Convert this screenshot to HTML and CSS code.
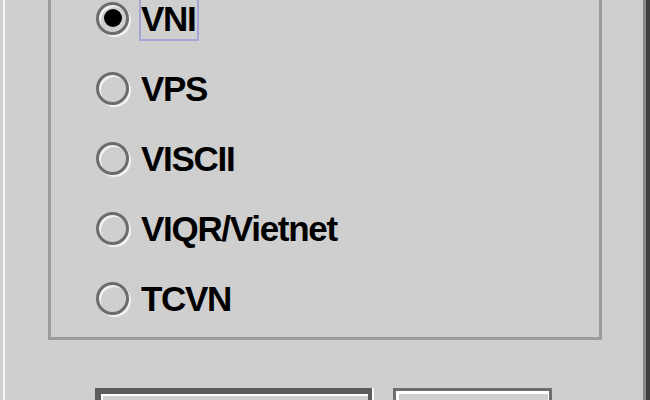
FILE: index.html
```html
<!DOCTYPE html>
<html>
<head>
<meta charset="utf-8">
<link rel="stylesheet" href="styles.css">
</head>
<body>
<div class="window">
  <div class="dialog">
    <div class="group">
      <div class="row"><span class="radio checked"><span class="dot"></span></span><span class="label focus">VNI</span></div>
      <div class="row"><span class="radio"></span><span class="label">VPS</span></div>
      <div class="row"><span class="radio"></span><span class="label">VISCII</span></div>
      <div class="row"><span class="radio"></span><span class="label">VIQR/Vietnet</span></div>
      <div class="row"><span class="radio"></span><span class="label">TCVN</span></div>
    </div>
    <div class="buttons">
      <div class="btn default"></div>
      <div class="btn normal"></div>
    </div>
  </div>
</div>
</body>
</html>
```
FILE: styles.css
```css
html, body {
  margin: 0;
  padding: 0;
  background: #cfcfcf;
  overflow: hidden;
}
.window {
  width: 650px;
  height: 400px;
  box-sizing: border-box;
  padding-left: 3px;
  border-right: 4px solid #404040;
  overflow: hidden;
  background: #cfcfcf;
}
.dialog {
  display: flow-root;
  height: 100%;
  box-sizing: border-box;
  border-left: 2px solid #f4f4f4;
  border-right: 3px solid #8a8a8a;
  padding-left: 43px;
}
.group {
  width: 554px;
  box-sizing: border-box;
  margin-top: -40px;
  border: 3px solid #9c9c9c;
  padding: 20px 0 4px 45px;
  font-family: "Liberation Sans", Arial, sans-serif;
  font-weight: bold;
  font-size: 35px;
  letter-spacing: -1.3px;
  color: #000;
}
.row {
  height: 70px;
  display: flex;
  align-items: center;
}
.radio {
  width: 33px;
  height: 33px;
  box-sizing: border-box;
  border-radius: 50%;
  border: 3px solid #6c6c6c;
  box-shadow: inset 2px 2px 0 #f2f2f2, 2px 2px 0 #f2f2f2;
  display: flex;
  align-items: center;
  justify-content: center;
  flex: none;
}
.dot {
  width: 18px;
  height: 18px;
  border-radius: 50%;
  background: #000;
}
.label {
  margin-left: 12px;
  line-height: 41px;
  border: 2px solid transparent;
  padding: 0 2px 0 0;
  position: relative;
  left: -2px;
}
.label.focus {
  border-color: #a6a6d6;
}
.buttons {
  display: flex;
  gap: 21px;
  margin-top: 48px;
  padding-left: 47px;
}
.btn {
  height: 40px;
  box-sizing: border-box;
  flex: none;
}
.btn.default {
  width: 277px;
  border: 6px solid #5c5c5c;
  border-right-width: 4px;
  box-shadow: inset 2px 2px 0 #fff, 2px 0 0 #fff;
}
.btn.normal {
  width: 159px;
  border: 3px solid #6e6e6e;
  box-shadow: inset 3px 3px 0 #fff, inset -1px 0 0 #fff;
}
```
